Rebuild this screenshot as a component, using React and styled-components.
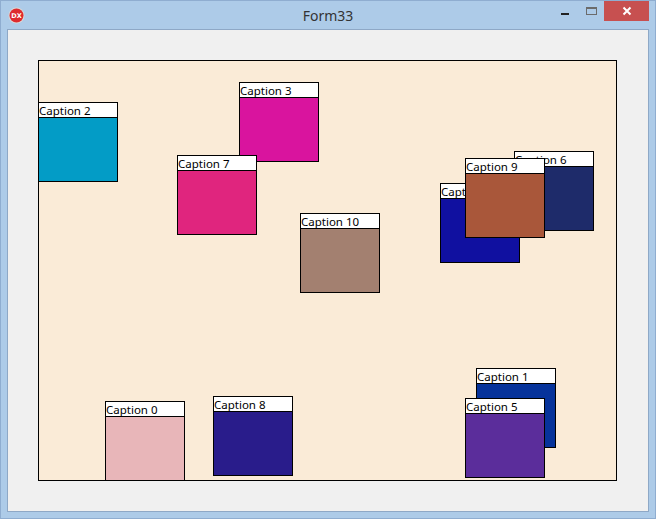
import React from 'react';
import styled, { createGlobalStyle } from 'styled-components';

const GlobalStyle = createGlobalStyle`
  html, body {
    margin: 0;
    padding: 0;
    background: #adcbe8;
  }
  * { box-sizing: border-box; }
`;

const Window = styled.div`
  width: 656px;
  height: 519px;
  display: flex;
  flex-direction: column;
  background: #adcbe8;
  border: 1px solid #8fadd0;
  font-family: "Noto Sans", "Open Sans", sans-serif;
`;

const TitleBar = styled.div`
  height: 29px;
  display: grid;
  grid-template-columns: 1fr auto 1fr;
  align-items: start;
`;

const AppIcon = styled.div`
  margin: 6px 0 0 7px;
  width: 17px;
  height: 17px;
`;

const Title = styled.div`
  padding-top: 6px;
  font-size: 14px;
  color: #333;
  line-height: 18px;
`;

const Controls = styled.div`
  display: flex;
  justify-content: flex-end;
  align-items: flex-start;
  padding-right: 6px;
`;

const ControlButton = styled.div`
  width: ${p => p.$w}px;
  height: 20px;
  display: flex;
  align-items: center;
  justify-content: center;
  background: ${p => p.$bg || 'transparent'};
`;

const Client = styled.div`
  flex: 1;
  margin: 0 6px 6px;
  border: 1px solid #8ea8c6;
  background: #f0f0f0;
  padding: 30px;
`;

const Panel = styled.div`
  position: relative;
  width: 579px;
  height: 421px;
  border: 1px solid #000;
  background: #faebd7;
  overflow: hidden;
`;

const Box = styled.div`
  position: absolute;
  left: ${p => p.$x - 1}px;
  top: ${p => p.$y - 1}px;
  width: 80px;
  height: 80px;
  border: 1px solid #000;
  display: flex;
  flex-direction: column;
`;

const Caption = styled.div`
  height: 15px;
  background: #fff;
  border-bottom: 1px solid #000;
  font-size: 11.5px;
  line-height: 15px;
  color: #000;
  white-space: nowrap;
  overflow: hidden;
`;

const Fill = styled.div`
  flex: 1;
  background: ${p => p.$color};
`;

const boxes = [
  { label: 'Caption 0', x: 67, y: 341, color: '#e8b6b9' },
  { label: 'Caption 1', x: 438, y: 308, color: '#06339b' },
  { label: 'Caption 2', x: 0, y: 42, color: '#039cc6' },
  { label: 'Caption 3', x: 201, y: 22, color: '#d9149e' },
  { label: 'Caption 4', x: 402, y: 123, color: '#1010a0' },
  { label: 'Caption 5', x: 427, y: 338, color: '#5b2d9b' },
  { label: 'Caption 6', x: 476, y: 91, color: '#1e2b6a' },
  { label: 'Caption 7', x: 139, y: 95, color: '#e0257e' },
  { label: 'Caption 8', x: 175, y: 336, color: '#291c8b' },
  { label: 'Caption 9', x: 427, y: 98, color: '#a9573a' },
  { label: 'Caption 10', x: 262, y: 153, color: '#a38070' },
];

const DxIcon = () => (
  <svg width="17" height="17" viewBox="0 0 17 17">
    <circle cx="8.5" cy="8.5" r="8" fill="#d8d8d8" />
    <circle cx="8.5" cy="8.5" r="7" fill="#de2a2e" />
    <text x="8.5" y="11" fontSize="6.5" fontWeight="bold" fill="#fff" textAnchor="middle" fontFamily="DejaVu Sans, sans-serif">DX</text>
  </svg>
);

export default function App() {
  return (
    <>
      <GlobalStyle />
      <Window>
        <TitleBar>
          <AppIcon><DxIcon /></AppIcon>
          <Title>Form33</Title>
          <Controls>
            <ControlButton $w={27}>
              <svg width="10" height="10" viewBox="0 0 10 10">
                <rect x="1" y="7" width="8" height="2" fill="#222" />
              </svg>
            </ControlButton>
            <ControlButton $w={26}>
              <svg width="11" height="10" viewBox="0 0 11 10">
                <rect x="0.5" y="1.5" width="10" height="7" fill="none" stroke="#6b6b6b" />
                <rect x="0" y="1" width="11" height="2" fill="#6b6b6b" />
              </svg>
            </ControlButton>
            <ControlButton $w={45} $bg="#c75050">
              <svg width="10" height="10" viewBox="0 0 10 10">
                <path d="M1.5 1.5 L8.5 8.5 M8.5 1.5 L1.5 8.5" stroke="#fff" strokeWidth="2" />
              </svg>
            </ControlButton>
          </Controls>
        </TitleBar>
        <Client>
          <Panel>
            {boxes.map(b => (
              <Box key={b.label} $x={b.x} $y={b.y}>
                <Caption>{b.label}</Caption>
                <Fill $color={b.color} />
              </Box>
            ))}
          </Panel>
        </Client>
      </Window>
    </>
  );
}
